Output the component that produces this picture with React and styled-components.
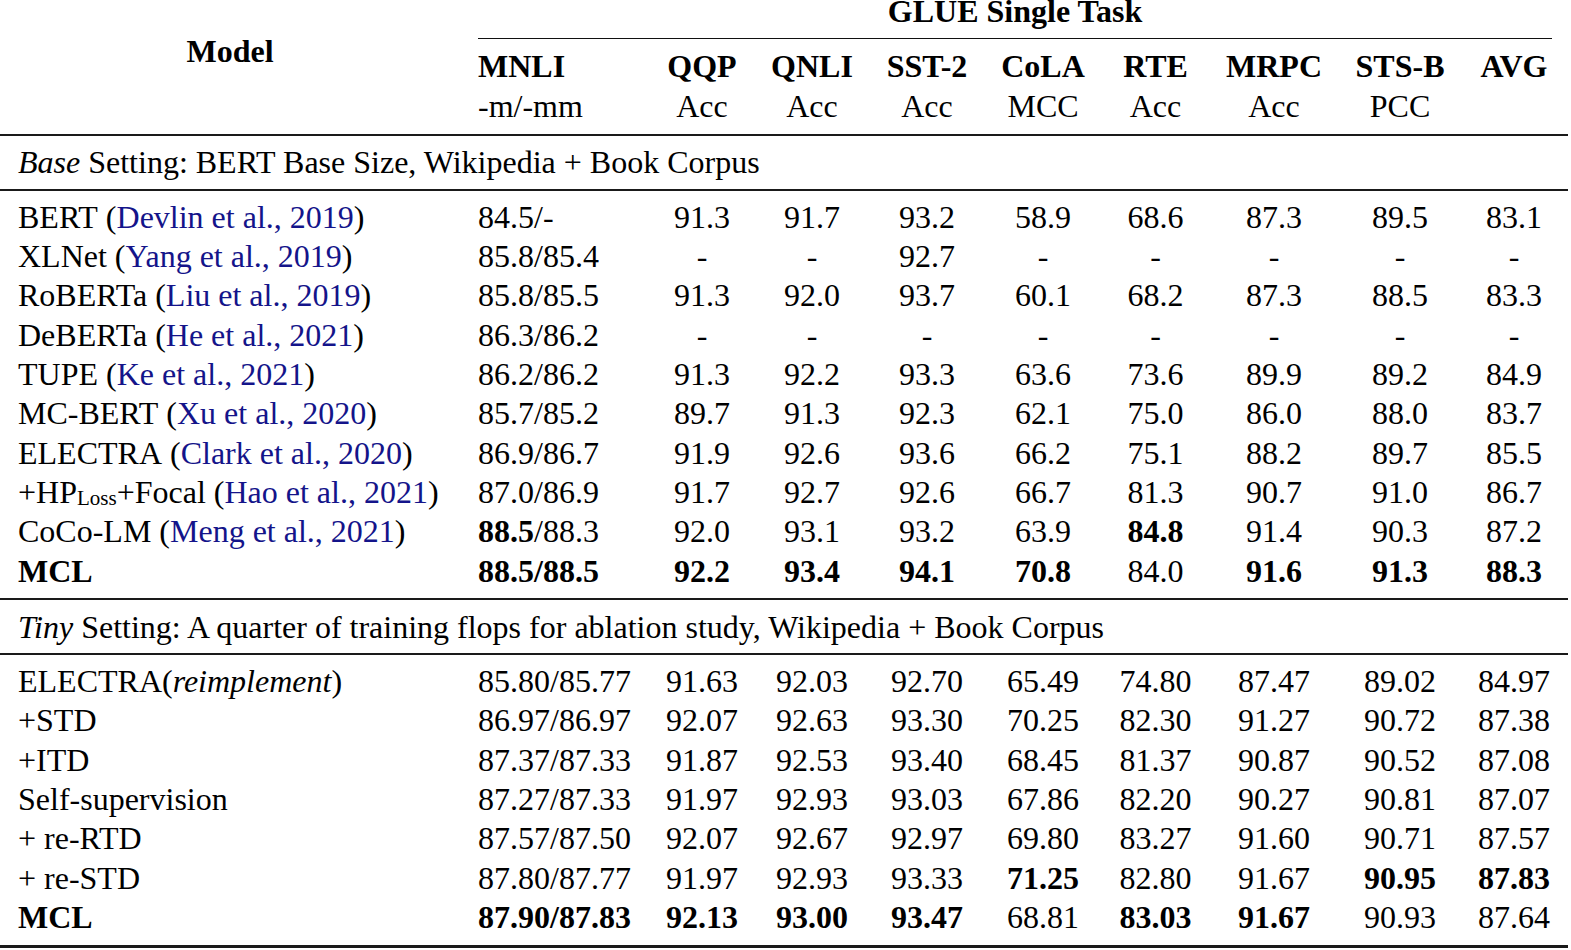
import React from 'react';
import styled, { createGlobalStyle } from 'styled-components';

const Global = createGlobalStyle`
  body {
    margin: 0;
    background: #fff;
    font-family: "Liberation Serif", "Times New Roman", serif;
    color: #000;
  }
`;

const COLS = '478px 169px 110px 110px 120px 112px 113px 124px 128px 100px';
const ROW_H = 39.35;

const Table = styled.div`
  width: 1568px;
  font-size: 32px;
  line-height: 1;
  overflow: hidden;
`;

const Head = styled.div`
  display: grid;
  grid-template-columns: ${COLS};
  grid-template-rows: 39px 7.5px ${ROW_H}px ${ROW_H}px 8.8px;
`;

const Cell = styled.div`
  display: flex;
  align-items: center;
  justify-content: ${(p) => (p.$left ? 'flex-start' : 'center')};
  padding-left: ${(p) => (p.$pad ? '18px' : '0')};
  font-weight: ${(p) => (p.$bold ? 700 : 400)};
  white-space: nowrap;
  height: ${ROW_H}px;
`;

const HeadCell = styled(Cell)`
  grid-row: ${(p) => p.$row};
  grid-column: ${(p) => p.$col};
`;

const ModelHead = styled.div`
  grid-column: 1;
  grid-row: 1 / span 3;
  padding-top: 35px;
  text-align: center;
  font-weight: 700;
  padding-right: 18px;
`;

const GlueHead = styled.div`
  grid-column: 2 / span 9;
  grid-row: 1;
  margin-right: 12px;
  border-bottom: 1.5px solid #111;
  text-align: center;
  font-weight: 700;
  overflow: hidden;
`;

const GlueText = styled.div`
  margin-top: -5px;
`;

const Rule = styled.div`
  height: ${(p) => p.$w || 2}px;
  background: #1a1a1a;
`;

const Section = styled.div`
  height: 53px;
  display: flex;
  align-items: center;
  padding-left: 18px;
  white-space: nowrap;
`;

const Body = styled.div`
  padding: 6px 0 8px;
`;

const Row = styled.div`
  display: grid;
  grid-template-columns: ${COLS};
  height: ${ROW_H}px;
`;

const Cite = styled.span`
  color: #14148a;
`;

const Sub = styled.span`
  font-size: 21px;
  position: relative;
  top: 6px;
`;

const B = styled.b`
  font-weight: 700;
`;

const cols = ['MNLI', 'QQP', 'QNLI', 'SST-2', 'CoLA', 'RTE', 'MRPC', 'STS-B', 'AVG'];
const metrics = ['-m/-mm', 'Acc', 'Acc', 'Acc', 'MCC', 'Acc', 'Acc', 'PCC', ''];

const cite = (name, ref) => (
  <>
    {name}&nbsp;(<Cite>{ref}</Cite>)
  </>
);

const base = [
  [cite('BERT', 'Devlin et al., 2019'), '84.5/-', '91.3', '91.7', '93.2', '58.9', '68.6', '87.3', '89.5', '83.1'],
  [cite('XLNet', 'Yang et al., 2019'), '85.8/85.4', '-', '-', '92.7', '-', '-', '-', '-', '-'],
  [cite('RoBERTa', 'Liu et al., 2019'), '85.8/85.5', '91.3', '92.0', '93.7', '60.1', '68.2', '87.3', '88.5', '83.3'],
  [cite('DeBERTa', 'He et al., 2021'), '86.3/86.2', '-', '-', '-', '-', '-', '-', '-', '-'],
  [cite('TUPE', 'Ke et al., 2021'), '86.2/86.2', '91.3', '92.2', '93.3', '63.6', '73.6', '89.9', '89.2', '84.9'],
  [cite('MC-BERT', 'Xu et al., 2020'), '85.7/85.2', '89.7', '91.3', '92.3', '62.1', '75.0', '86.0', '88.0', '83.7'],
  [cite('ELECTRA', 'Clark et al., 2020'), '86.9/86.7', '91.9', '92.6', '93.6', '66.2', '75.1', '88.2', '89.7', '85.5'],
  [
    <>
      +HP<Sub>Loss</Sub>+Focal&nbsp;(<Cite>Hao et al., 2021</Cite>)
    </>,
    '87.0/86.9', '91.7', '92.7', '92.6', '66.7', '81.3', '90.7', '91.0', '86.7',
  ],
  [
    cite('CoCo-LM', 'Meng et al., 2021'),
    <>
      <B>88.5</B>/88.3
    </>,
    '92.0', '93.1', '93.2', '63.9', <B>84.8</B>, '91.4', '90.3', '87.2',
  ],
  [<B>MCL</B>, <B>88.5/88.5</B>, <B>92.2</B>, <B>93.4</B>, <B>94.1</B>, <B>70.8</B>, '84.0', <B>91.6</B>, <B>91.3</B>, <B>88.3</B>],
];

const tiny = [
  [<>ELECTRA(<i>reimplement</i>)</>, '85.80/85.77', '91.63', '92.03', '92.70', '65.49', '74.80', '87.47', '89.02', '84.97'],
  ['+STD', '86.97/86.97', '92.07', '92.63', '93.30', '70.25', '82.30', '91.27', '90.72', '87.38'],
  ['+ITD', '87.37/87.33', '91.87', '92.53', '93.40', '68.45', '81.37', '90.87', '90.52', '87.08'],
  ['Self-supervision', '87.27/87.33', '91.97', '92.93', '93.03', '67.86', '82.20', '90.27', '90.81', '87.07'],
  ['+ re-RTD', '87.57/87.50', '92.07', '92.67', '92.97', '69.80', '83.27', '91.60', '90.71', '87.57'],
  ['+ re-STD', '87.80/87.77', '91.97', '92.93', '93.33', <B>71.25</B>, '82.80', '91.67', <B>90.95</B>, <B>87.83</B>],
  [<B>MCL</B>, <B>87.90/87.83</B>, <B>92.13</B>, <B>93.00</B>, <B>93.47</B>, '68.81', <B>83.03</B>, <B>91.67</B>, '90.93', '87.64'],
];

const DataRows = ({ rows }) => (
  <Body>
    {rows.map((r, i) => (
      <Row key={i}>
        {r.map((c, j) => (
          <Cell key={j} $left={j < 2} $pad={j === 0}>
            {c}
          </Cell>
        ))}
      </Row>
    ))}
  </Body>
);

export default function App() {
  return (
    <>
      <Global />
      <Table>
        <Head>
          <ModelHead>Model</ModelHead>
          <GlueHead>
            <GlueText>GLUE Single Task</GlueText>
          </GlueHead>
          {cols.map((c, i) => (
            <HeadCell key={c} $bold $left={i === 0} $row={3} $col={i + 2}>
              {c}
            </HeadCell>
          ))}
          {metrics.map((m, i) => (
            <HeadCell key={i} $left={i === 0} $row={4} $col={i + 2}>
              {m}
            </HeadCell>
          ))}
        </Head>
        <Rule />
        <Section>
          <i>Base</i>&nbsp;Setting: BERT Base Size, Wikipedia + Book Corpus
        </Section>
        <Rule />
        <DataRows rows={base} />
        <Rule />
        <Section>
          <i>Tiny</i>&nbsp;Setting: A quarter of training flops for ablation study, Wikipedia + Book Corpus
        </Section>
        <Rule />
        <DataRows rows={tiny} />
        <Rule $w={3} />
      </Table>
    </>
  );
}
